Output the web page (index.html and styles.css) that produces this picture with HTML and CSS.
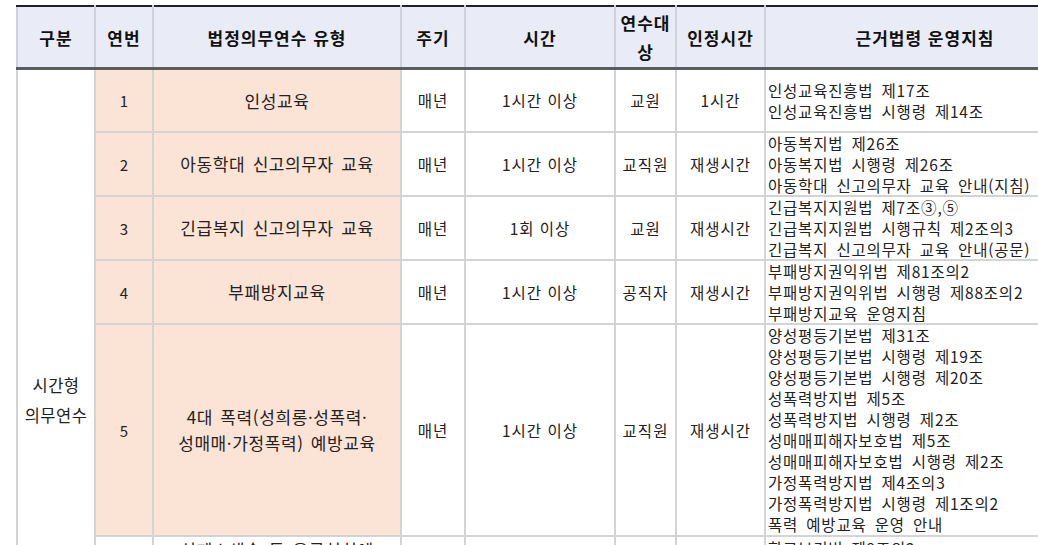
FILE: index.html
```html
<!DOCTYPE html>
<html lang="ko">
<head>
<meta charset="utf-8">
<title>법정의무연수</title>
<link rel="stylesheet" href="styles.css">
</head>
<body>
<div class="wrap">
<table class="tbl">
  <colgroup>
    <col class="c-gubun">
    <col class="c-no">
    <col class="c-type">
    <col class="c-cycle">
    <col class="c-time">
    <col class="c-target">
    <col class="c-credit">
    <col class="c-law">
  </colgroup>
  <thead>
    <tr>
      <th>구분</th>
      <th>연번</th>
      <th>법정의무연수 유형</th>
      <th>주기</th>
      <th>시간</th>
      <th>연수대<br>상</th>
      <th>인정시간</th>
      <th>근거법령 운영지침</th>
    </tr>
  </thead>
  <tbody>
    <tr class="r2">
      <td class="gubun" rowspan="7">시간형<br>의무연수</td>
      <td class="pink no">1</td>
      <td class="pink type">인성교육</td>
      <td>매년</td>
      <td>1시간 이상</td>
      <td>교원</td>
      <td>1시간</td>
      <td class="law"><div class="ln">인성교육진흥법 제17조</div><div class="ln">인성교육진흥법 시행령 제14조</div></td>
    </tr>
    <tr class="r3">
      <td class="pink no">2</td>
      <td class="pink type">아동학대 신고의무자 교육</td>
      <td>매년</td>
      <td>1시간 이상</td>
      <td>교직원</td>
      <td>재생시간</td>
      <td class="law"><div class="fit"><div class="ln">아동복지법 제26조</div><div class="ln">아동복지법 시행령 제26조</div><div class="ln">아동학대 신고의무자 교육 안내(지침)</div></div></td>
    </tr>
    <tr class="r3">
      <td class="pink no">3</td>
      <td class="pink type">긴급복지 신고의무자 교육</td>
      <td>매년</td>
      <td>1회 이상</td>
      <td>교원</td>
      <td>재생시간</td>
      <td class="law"><div class="fit"><div class="ln">긴급복지지원법 제7조③,⑤</div><div class="ln">긴급복지지원법 시행규칙 제2조의3</div><div class="ln">긴급복지 신고의무자 교육 안내(공문)</div></div></td>
    </tr>
    <tr class="r3">
      <td class="pink no">4</td>
      <td class="pink type">부패방지교육</td>
      <td>매년</td>
      <td>1시간 이상</td>
      <td>공직자</td>
      <td>재생시간</td>
      <td class="law"><div class="fit"><div class="ln">부패방지권익위법 제81조의2</div><div class="ln">부패방지권익위법 시행령 제88조의2</div><div class="ln">부패방지교육 운영지침</div></div></td>
    </tr>
    <tr>
      <td class="pink no">5</td>
      <td class="pink type">4대 폭력(성희롱·성폭력·<br>성매매·가정폭력) 예방교육</td>
      <td>매년</td>
      <td>1시간 이상</td>
      <td>교직원</td>
      <td>재생시간</td>
      <td class="law"><div class="ln">양성평등기본법 제31조</div><div class="ln">양성평등기본법 시행령 제19조</div><div class="ln">양성평등기본법 시행령 제20조</div><div class="ln">성폭력방지법 제5조</div><div class="ln">성폭력방지법 시행령 제2조</div><div class="ln">성매매피해자보호법 제5조</div><div class="ln">성매매피해자보호법 시행령 제2조</div><div class="ln">가정폭력방지법 제4조의3</div><div class="ln">가정폭력방지법 시행령 제1조의2</div><div class="ln">폭력 예방교육 운영 안내</div></td>
    </tr>
    <tr class="r5">
      <td class="no">6</td>
      <td class="type">심폐소생술 등 응급처치에<br>관한 교육</td>
      <td>매년<br>1회</td>
      <td>4시간 이상</td>
      <td>교직원</td>
      <td>재생시간</td>
      <td class="law law-top"><div class="ln">학교보건법 제9조의2</div><div class="ln">학교보건법 시행규칙 제10조</div></td>
    </tr>
    <tr class="r6">
      <td class="no">7</td>
      <td class="type">감염병 예방교육</td>
      <td>매년</td>
      <td>1시간 이상</td>
      <td>교직원</td>
      <td>재생시간</td>
      <td class="law"><div class="ln">학교보건법 제9조의2</div></td>
    </tr>
  </tbody>
</table>
</div>
</body>
</html>
```

FILE: styles.css
```css
html, body {
  margin: 0;
  padding: 0;
  overflow: hidden;
  background: #ffffff;
}

body {
  font-family: "Noto Sans CJK KR", "Noto Sans", sans-serif;
  color: #222222;
}

.wrap {
  padding: 5px 0 0 16px;
}

.tbl {
  border-collapse: collapse;
  table-layout: fixed;
  width: 1068px;
}

.c-gubun { width: 78px; }
.c-no { width: 58px; }
.c-type { width: 248px; }
.c-cycle { width: 64px; }
.c-time { width: 150px; }
.c-target { width: 61px; }
.c-credit { width: 89px; }
.c-law { width: 320px; }

.tbl th {
  background: #e9ecf6;
  color: #111111;
  font-size: 17px;
  font-weight: 700;
  line-height: 29px;
  letter-spacing: 1px;
  height: 60px;
  padding: 0 2px;
  border-top: 2px solid #222222;
  border-bottom: 3px solid #5c5c5c;
  border-left: 2px solid #cfd2da;
  border-right: 2px solid #cfd2da;
  text-align: center;
  vertical-align: middle;
}

.tbl td {
  border: 2px solid #d4d4d4;
  text-align: center;
  vertical-align: middle;
  font-size: 15.5px;
  line-height: 21px;
  letter-spacing: 1px;
  padding: 0 2px;
}

.tbl tr.r2 td { height: 61px; }
.tbl tr.r3 td { height: 62px; }
.tbl tr.r5 td { height: 50px; }
.tbl tr.r6 td { height: 138px; }

.tbl td.gubun {
  font-size: 16.5px;
  line-height: 30px;
  letter-spacing: 0.5px;
  height: auto;
}

.tbl td.no {
  font-size: 15px;
  letter-spacing: 0;
}

.tbl td.type {
  font-size: 17px;
  line-height: 26px;
  letter-spacing: 0.6px;
  word-spacing: 2px;
}

.tbl td.pink {
  background: #fbe3d6;
}

.tbl td.law {
  text-align: left;
  font-size: 15.5px;
  letter-spacing: 0.8px;
  word-spacing: 3px;
  padding: 0 0 0 2px;
  white-space: nowrap;
}

.tbl td.law-top {
  vertical-align: top;
  padding-top: 1px;
}

.fit {
  height: 62px;
  display: flex;
  flex-direction: column;
  justify-content: center;
}

.ln {
  flex: none;
  height: 21px;
  line-height: 21px;
}
```
